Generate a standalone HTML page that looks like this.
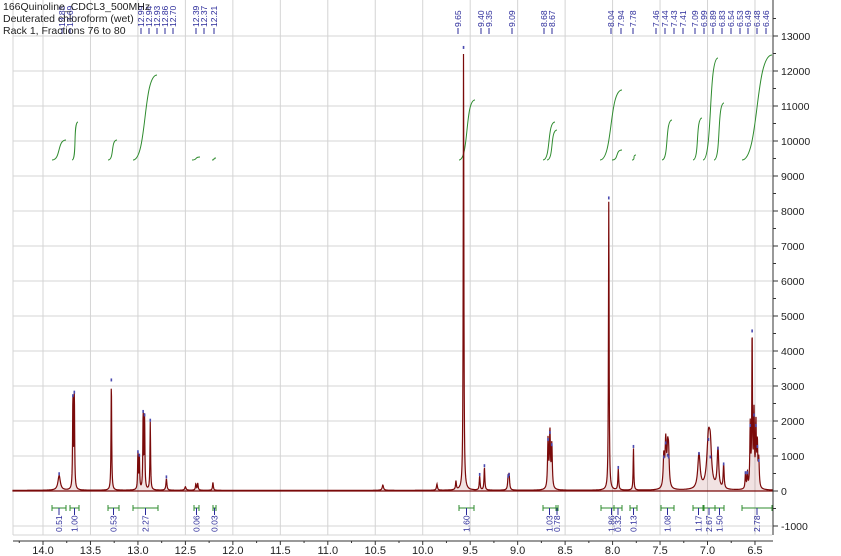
<!DOCTYPE html>
<html><head><meta charset="utf-8"><style>
html,body{margin:0;padding:0;background:#fff;width:841px;height:556px;overflow:hidden}
svg{display:block;font-family:"Liberation Sans","DejaVu Sans",sans-serif}
</style></head><body>
<svg id="s" width="841" height="556" viewBox="0 0 841 556" xmlns="http://www.w3.org/2000/svg">
<g id="grid" stroke="#d4d4d4" stroke-width="1"></g>
<g id="ints" fill="none" stroke="#2e8b2e" stroke-width="1"></g>
<path id="spec" fill="#8b1010" fill-opacity="0.12" stroke="#7a0a0a" stroke-width="1.2"/>
<g id="marks" fill="#4a4ab0"></g>
<g id="lbl" fill="#2b2b9a" font-size="8.5"></g>
<g id="ax" stroke="#333" stroke-width="1"></g>
<g id="axt" fill="#222" font-size="11"></g>
<text x="3" y="10" font-size="10.5" fill="#222">166Quinoline_CDCL3_500MHz</text>
<text x="3" y="22" font-size="10.5" fill="#222">Deuterated chloroform (wet)</text>
<text x="3" y="34" font-size="10.5" fill="#222">Rack 1, Fractions 76 to 80</text>
</svg>
<script>
var NS="http://www.w3.org/2000/svg";
function X(p){return 43+(14-p)*94.93}
function Y(v){return 491-v*0.035}
function el(g,t,a,txt){var e=document.createElementNS(NS,t);for(var k in a)e.setAttribute(k,a[k]);if(txt!=null)e.textContent=txt;document.getElementById(g).appendChild(e);return e}
for(var p=14;p>=6.5;p-=0.5){var x=X(p);el('grid','line',{x1:x,y1:0,x2:x,y2:535})}
for(var v=-1000;v<=13000;v+=1000){var y=Y(v);el('grid','line',{x1:13,y1:y,x2:772,y2:y})}
el('grid','line',{x1:13,y1:0,x2:13,y2:535});
el('grid','line',{x1:13,y1:535,x2:772,y2:535});
var pk=[[13.83,420,0.015],[13.685,2650,0.004],[13.67,2750,0.004],[13.28,3100,0.004],[13.0,1050,0.004],[12.985,950,0.004],[12.945,2200,0.004],[12.93,2100,0.004],[12.87,1950,0.004],[12.70,330,0.006],[12.5,100,0.008],[12.39,180,0.005],[12.37,200,0.005],[12.21,230,0.005],[10.42,150,0.008],[9.85,180,0.006],[9.65,250,0.005],[9.57,12600,0.004],[9.40,400,0.005],[9.35,650,0.005],[9.10,350,0.006],[9.09,400,0.006],[8.68,1400,0.006],[8.66,1600,0.006],[8.64,1250,0.006],[8.04,8300,0.004],[7.94,600,0.005],[7.78,1200,0.004],[7.46,900,0.008],[7.44,1300,0.008],[7.42,950,0.008],[7.41,900,0.008],[7.09,1000,0.015],[6.99,1400,0.02],[6.97,900,0.015],[6.89,1150,0.01],[6.83,700,0.006],[6.60,450,0.005],[6.58,450,0.005],[6.55,1800,0.005],[6.53,4500,0.004],[6.51,2100,0.005],[6.49,1800,0.005],[6.475,1200,0.005],[6.46,800,0.006]];
var d="M13 "+Y(0);
for(var x=13;x<=772;x+=0.25){var p=14-(x-43)/94.93,v=20;for(var i=0;i<pk.length;i++){var q=pk[i],dd=(p-q[0])/q[2];v+=q[1]/(1+dd*dd)}d+="L"+x.toFixed(2)+" "+Y(v).toFixed(1)}
d+="L772 "+Y(0)+"Z";
document.getElementById('spec').setAttribute('d',d);
pk.forEach(function(q){if(q[1]>300)el('marks','rect',{x:X(q[0])-0.8,y:Y(q[1]+30)-3,width:1.6,height:3})});
var ig=[[52,66,160,140],[72,78,160,122],[108,117,160,140],[133,157,160,75],[192,200,160,157],[212,216,160,158],[459,475,160,100],[543,555,160,122],[547,557,160,130],[600,622,160,90],[612,622,160,150],[632,636,160,155],[662,672,160,120],[693,702,160,118],[703,718,160,58],[714,724,160,103],[742,772,160,55]];
ig.forEach(function(a){var x1=a[0],x2=a[1],y1=a[2],y2=a[3],m=(x1+x2)/2;el('ints','path',{d:"M"+x1+" "+y1+"C"+(m+2)+" "+y1+" "+(m-2)+" "+y2+" "+x2+" "+y2})});
var tl=[[62,"13.83"],[70,"13.69"],[141,"12.99"],[149,"12.94"],[157,"12.93"],[165,"12.86"],[173,"12.70"],[196,"12.39"],[204,"12.37"],[214,"12.21"],[458,"9.65"],[481,"9.40"],[489,"9.35"],[512,"9.09"],[544,"8.68"],[552,"8.67"],[611,"8.04"],[621,"7.94"],[633,"7.78"],[656,"7.46"],[665,"7.44"],[674,"7.43"],[683,"7.41"],[695,"7.09"],[704,"6.99"],[713,"6.89"],[722,"6.83"],[731,"6.54"],[740,"6.53"],[748,"6.49"],[757,"6.48"],[766,"6.46"]];
tl.forEach(function(a){el('lbl','text',{x:0,y:0,transform:"translate("+(a[0]+3)+",27) rotate(-90)"},a[1]);el('lbl','line',{x1:a[0],y1:28,x2:a[0],y2:34,stroke:"#2b2b9a","stroke-width":1})});
var bi=[[52,66,"0.51"],[70,79,"1.00"],[108,119,"0.53"],[133,158,"2.27"],[194,199,"0.06"],[213,216,"0.03"],[459,474,"1.60"],[543,556,"1.03"],[556,558,"0.78"],[601,622,"1.86"],[614,622,"0.32"],[630,637,"0.13"],[661,674,"1.08"],[693,704,"1.17"],[703,715,"2.67"],[715,724,"1.50"],[742,772,"2.78"]];
bi.forEach(function(a){var m=(a[0]+a[1])/2;el('ints','line',{x1:a[0],y1:508,x2:a[1],y2:508});el('ints','line',{x1:a[0],y1:505,x2:a[0],y2:511});el('ints','line',{x1:a[1],y1:505,x2:a[1],y2:511});el('lbl','line',{x1:m,y1:508,x2:m,y2:515,stroke:"#2b2b9a"});el('lbl','text',{x:0,y:0,transform:"translate("+(m+3)+",532) rotate(-90)"},a[2])});
el('ax','line',{x1:773,y1:0,x2:773,y2:535});
for(var v=-1000;v<=13500;v+=500){var y=Y(v);el('ax','line',{x1:773,y1:y,x2:v%1000==0?778:776,y2:y});if(v%1000==0)el('axt','text',{x:781,y:y+4,"font-size":"10.5"},String(v))}
el('ax','line',{x1:13,y1:541,x2:773,y2:541});
for(var p=14.25;p>=6.25;p-=0.25){var x=X(p);if(x<13||x>773)continue;el('ax','line',{x1:x,y1:541,x2:x,y2:Math.abs(p*2-Math.round(p*2))<0.01?545:543})}
for(var p=14;p>=6.5;p-=0.5){el('axt','text',{x:X(p),y:554,"text-anchor":"middle"},p.toFixed(1))}
</script>
</body></html>
